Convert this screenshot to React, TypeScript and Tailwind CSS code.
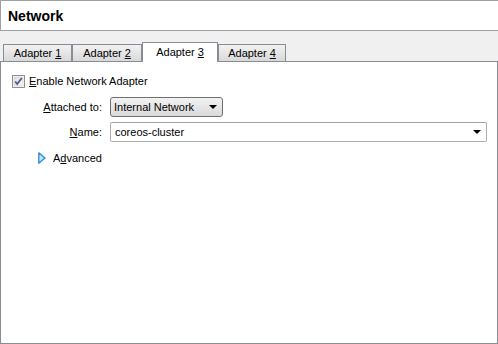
const tabs = [
  { n: '1', w: 'w-[69px]', active: false },
  { n: '2', w: 'w-[70px]', active: false },
  { n: '3', w: 'w-[76px]', active: true },
  { n: '4', w: 'w-[68px]', active: false },
];

const Arrow = () => (
  <svg width="8" height="4" viewBox="0 0 8 4">
    <path d="M0 0 H8 L4 4 Z" fill="#000" />
  </svg>
);

export default function App() {
  return (
    <div className="w-[498px] h-[344px] bg-[#f0f0f0] flex flex-col font-['Liberation_Sans',Arial,sans-serif] text-[11px] text-black">
      {/* Header */}
      <div className="h-[31px] shrink-0 bg-white border-t border-l border-b border-[#a0a0a0] flex items-center pl-[7px] pt-[1px]">
        <span className="font-bold text-[14px]">Network</span>
      </div>

      {/* Tabs */}
      <div className="h-[30px] shrink-0 flex items-end pl-[3px] relative z-10">
        {tabs.map((t) =>
          t.active ? (
            <div
              key={t.n}
              className={`${t.w} h-[20px] -mb-px bg-white border-t border-l border-r border-[#898c95] flex items-center justify-center pb-[1px]`}
            >
              Adapter <span className="underline ml-[3px]">{t.n}</span>
            </div>
          ) : (
            <div
              key={t.n}
              className={`${t.w} h-[17px] bg-gradient-to-b from-[#f2f2f2] to-[#d9d9d9] border-t border-l border-r border-[#898c95] flex items-center justify-center`}
            >
              Adapter <span className="underline ml-[3px]">{t.n}</span>
            </div>
          )
        )}
      </div>

      {/* Content */}
      <div className="flex-1 bg-white border border-[#898c95]">
        <div className="flex items-center gap-[4px] pl-[11px] mt-[13px] h-[13px]">
          <svg width="13" height="13" viewBox="0 0 13 13">
            <defs>
              <linearGradient id="cb" x1="0" y1="0" x2="1" y2="1">
                <stop offset="0" stopColor="#dcdcdc" />
                <stop offset="1" stopColor="#fbfbfb" />
              </linearGradient>
            </defs>
            <rect x="0.5" y="0.5" width="12" height="12" fill="#fff" stroke="#8f8f8f" />
            <rect x="2" y="2" width="9" height="9" fill="url(#cb)" stroke="#c8c8c8" strokeWidth="0.6" />
            <path d="M3.2 6.5 L5.2 9 L9.8 3" fill="none" stroke="#4a5f97" strokeWidth="1.8" />
          </svg>
          <span>
            <span className="underline">E</span>nable Network Adapter
          </span>
        </div>

        <div className="flex items-center mt-[9px] h-[20px]">
          <div className="w-[101px] text-right">
            <span className="underline">A</span>ttached to:
          </div>
          <div className="ml-[8px] w-[113px] h-[20px] rounded-[3px] border border-[#707070] bg-gradient-to-b from-[#f2f2f2] to-[#dadada] flex items-center justify-between pl-[3px] pr-[5px]">
            <span>Internal Network</span>
            <Arrow />
          </div>
        </div>

        <div className="flex items-center mt-[5px] h-[20px]">
          <div className="w-[101px] text-right">
            <span className="underline">N</span>ame:
          </div>
          <div className="ml-[8px] w-[377px] h-[20px] rounded-[2px] border border-[#abadb3] border-t-[#a0a0a0] bg-white flex items-center justify-between pl-[4px] pr-[5px]">
            <span>coreos-cluster</span>
            <Arrow />
          </div>
        </div>

        <div className="flex items-center gap-[7px] mt-[9px] pl-[37px] h-[14px]">
          <svg width="8" height="12" viewBox="0 0 8 12">
            <path d="M0.8 0.8 L7 6 L0.8 11.2 Z" fill="#bfe4fb" stroke="#2a8bd3" strokeWidth="1.3" strokeLinejoin="round" />
          </svg>
          <span>
            A<span className="underline">d</span>vanced
          </span>
        </div>
      </div>
    </div>
  );
}
